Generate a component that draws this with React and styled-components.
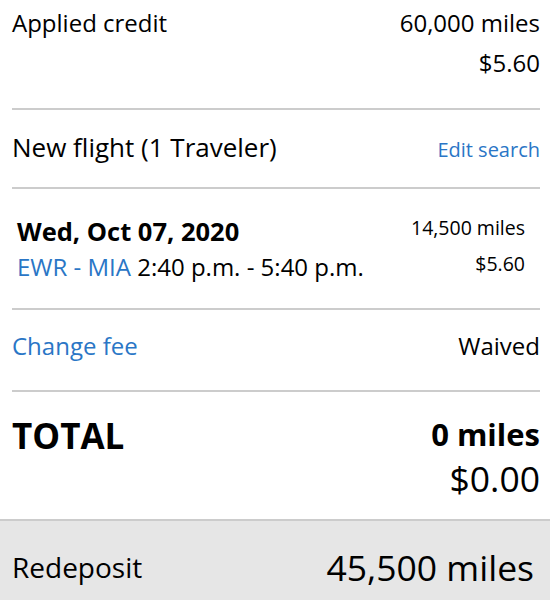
import React from 'react';
import styled, { createGlobalStyle } from 'styled-components';

const GlobalStyle = createGlobalStyle`
    html, body {
        margin: 0;
        padding: 0;
        background: #fff;
    }
    body {
        font-family: "Open Sans", "Noto Sans", sans-serif;
        color: #000;
    }
`;

const Summary = styled.div`
    padding: 0 10px 0 12px;
`;

const Section = styled.div`
    display: flex;
    justify-content: space-between;
    align-items: ${props => props.align || 'flex-start'};
    padding: ${props => props.pad};
    border-bottom: 2px solid #cccccc;
    &:last-child {
        border-bottom: none;
    }
`;

const Column = styled.div`
    display: flex;
    flex-direction: column;
    align-items: ${props => (props.right ? 'flex-end' : 'flex-start')};
    margin-top: ${props => props.offset || 0}px;
`;

const Text = styled.span`
    font-size: ${props => props.size || 24}px;
    line-height: ${props => props.lh || 40}px;
    font-weight: ${props => (props.bold ? 700 : 400)};
    color: ${props => (props.link ? '#2a76c6' : '#000')};
    white-space: nowrap;
`;

const Link = styled.a`
    color: #2a76c6;
    text-decoration: none;
    cursor: pointer;
`;

const Footer = styled.div`
    display: flex;
    justify-content: space-between;
    align-items: center;
    background: #e6e6e6;
    border-top: 2px solid #cccccc;
    padding: 22px 16px 20px 12px;
`;

const FooterLabel = styled.span`
    font-size: 28px;
`;

const FooterValue = styled.span`
    font-size: 35.5px;
`;

export default function App() {
    return (
        <>
            <GlobalStyle />
            <Summary>
                <Section pad="3px 0 25px 0">
                    <Text>Applied credit</Text>
                    <Column right>
                        <Text>60,000 miles</Text>
                        <Text>$5.60</Text>
                    </Column>
                </Section>

                <Section pad="17px 0 17px 0" align="baseline">
                    <Text size={26}>New flight (1 Traveler)</Text>
                    <Text size={20} link><Link>Edit search</Link></Text>
                </Section>

                <Section pad="21px 15px 23px 5px">
                    <Column offset={3}>
                        <Text bold size={25.5} lh={36}>Wed, Oct 07, 2020</Text>
                        <Text lh={36}><Link>EWR - MIA</Link> 2:40 p.m. - 5:40 p.m.</Text>
                    </Column>
                    <Column right>
                        <Text size={19.5} lh={36}>14,500 miles</Text>
                        <Text size={19.5} lh={36}>$5.60</Text>
                    </Column>
                </Section>

                <Section pad="16px 0 24px 0">
                    <Text link>Change fee</Text>
                    <Text>Waived</Text>
                </Section>

                <Section pad="20px 0 19px 0">
                    <Column offset={2}>
                        <Text bold size={35} lh={44}>TOTAL</Text>
                    </Column>
                    <Column right>
                        <Text bold size={31} lh={44}>0 miles</Text>
                        <Text size={35.5} lh={44}>$0.00</Text>
                    </Column>
                </Section>
            </Summary>
            <Footer>
                <FooterLabel>Redeposit</FooterLabel>
                <FooterValue>45,500 miles</FooterValue>
            </Footer>
        </>
    );
}
